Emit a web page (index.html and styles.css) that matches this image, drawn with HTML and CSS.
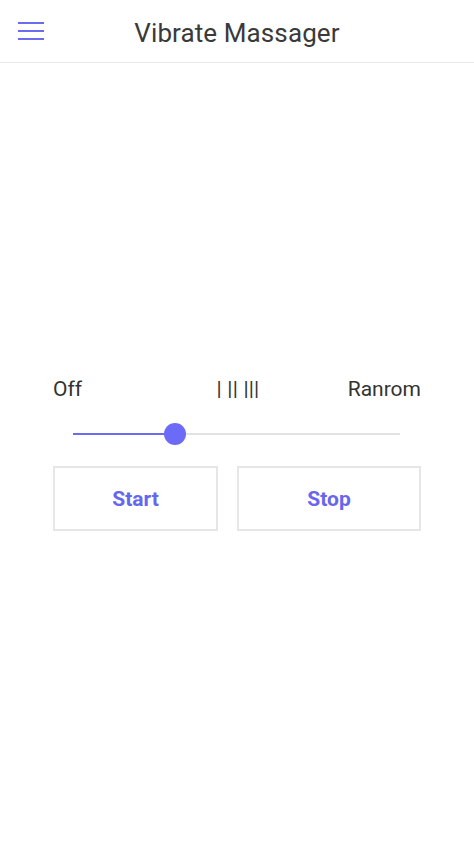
FILE: index.html
```html
<!DOCTYPE html>
<html lang="en">
<head>
    <meta charset="UTF-8">
    <meta name="viewport" content="width=device-width, initial-scale=1.0">
    <title>Vibrate Massager</title>
    <link rel="stylesheet" href="styles.css">
</head>
<body>
    <div class="header">
        <button class="menu-btn" aria-label="Menu">
            <svg width="26" height="20" viewBox="0 0 26 20">
                <rect x="0" y="1" width="26" height="2" fill="#6b6bf2"/>
                <rect x="0" y="9" width="26" height="2" fill="#6b6bf2"/>
                <rect x="0" y="17" width="26" height="2" fill="#6b6bf2"/>
            </svg>
        </button>
        <h1>Vibrate Massager</h1>
    </div>

    <div class="content">
        <div class="modes">
            <span class="mode-left">Off</span>
            <span class="levels">| || |||</span>
            <span class="mode-right">Ranrom</span>
        </div>

        <div class="slider">
            <div class="track">
                <div class="fill" style="width: 31.2%"></div>
                <div class="thumb" style="left: 31.2%"></div>
            </div>
        </div>

        <div class="actions">
            <button class="btn btn-start">Start</button>
            <button class="btn btn-stop">Stop</button>
        </div>
    </div>
</body>
</html>
```

FILE: styles.css
```css
body { margin: 0; background: #fff; font-family: Roboto, "Liberation Sans", sans-serif; color: #333; }
.header { position: relative; height: 62px; border-bottom: 1px solid #e8e8e8; display: flex; align-items: center; justify-content: center; }
.header h1 { margin: 3px 0 0; font-size: 26px; font-weight: 400; color: #3a3a3a; letter-spacing: 0.1px; }
.menu-btn { position: absolute; left: 18px; top: 21px; background: none; border: none; padding: 0; line-height: 0; }
.content { padding: 313px 53px 0 53px; }
.modes { display: grid; grid-template-columns: 1fr auto 1fr; align-items: center; font-size: 21px; color: #333; height: 26px; }
.modes .levels { letter-spacing: 0.2px; margin-left: 2px; }
.modes .mode-right { text-align: right; }
.slider { padding: 31px 21px 0 20px; }
.track { position: relative; height: 2px; background: #e2e2e2; }
.fill { position: absolute; left: 0; top: 0; height: 2px; background: #6b6bf2; }
.thumb { position: absolute; top: -10px; width: 22px; height: 22px; margin-left: -11px; border-radius: 50%; background: #6b6bf7; }
.actions { display: flex; gap: 19px; margin-top: 31px; }
.btn { height: 65px; background: #fff; border: 2px solid #e6e6e6; font-family: Roboto, "Liberation Sans", sans-serif; font-size: 21px; font-weight: 700; color: #6666ee; }
.btn-start { width: 165px; }
.btn-stop { width: 184px; }
```
